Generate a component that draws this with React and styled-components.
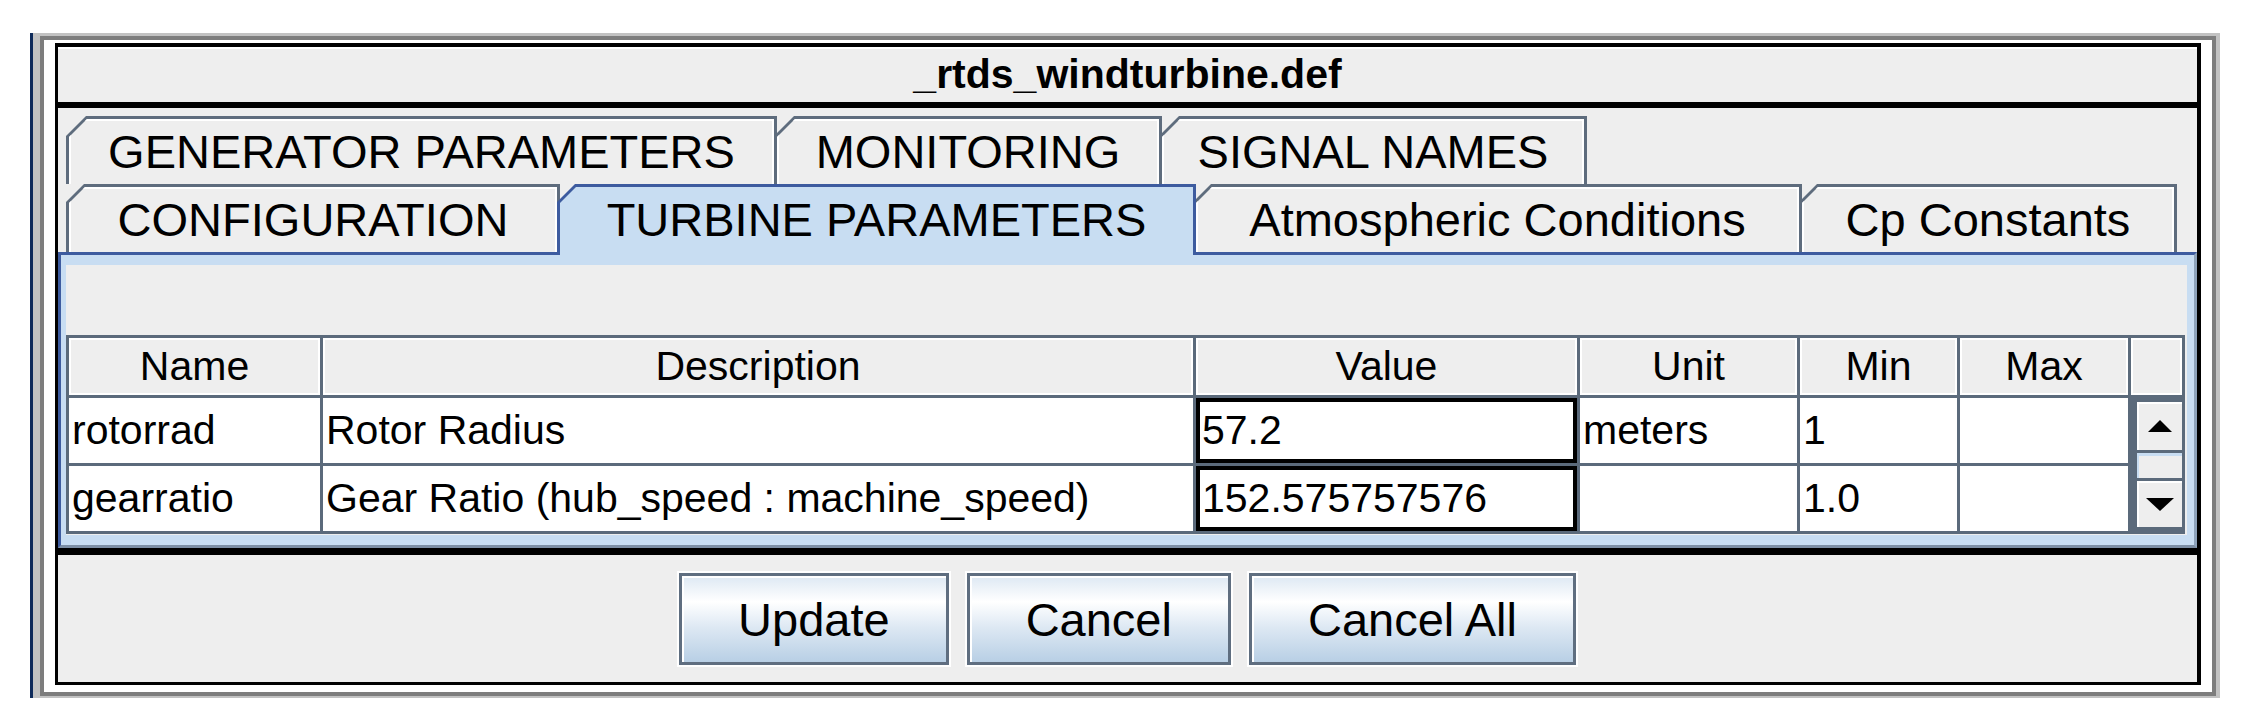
import React from 'react';
import styled, { createGlobalStyle } from 'styled-components';

const GlobalStyle = createGlobalStyle`
  * { box-sizing: border-box; }
  body {
    margin: 0;
    background: #fff;
    font-family: "Liberation Sans", Arial, sans-serif;
    color: #000;
  }
`;

const SLATE = '#5b6a7b';
const BLUE = '#3d5b9f';
const LIGHT_BLUE = '#c8ddf2';
const CONTROL = '#eeeeee';

/* ===== WINDOW SHELL ===== */
const Window = styled.div`
  margin: 33px 0 0 30px;
  width: 2190px;
  border-left: 3px solid #0e2a5a;
`;

const Frame = styled.div`
  border-style: solid;
  border-color: #c2c2c2;
  border-width: 3px 4px 2px 7px;
  box-shadow: inset 0 0 0 4px #7d7d7d;
  background: #fff;
  padding: 7px 15px 11px 15px;
`;

const InnerPanel = styled.div`
  border: 3px solid #000;
  border-top-width: 4px;
  border-right-width: 4px;
  background: ${CONTROL};
  display: flex;
  flex-direction: column;
`;

const TitleBar = styled.div`
  height: 55px;
  display: flex;
  align-items: center;
  justify-content: center;
  font-size: 41px;
  font-weight: 700;
  box-shadow: inset 0 2px 0 #fff;
`;

const Rule = styled.div`
  height: ${p => p.$h}px;
  background: #000;
`;

/* ===== TABS ===== */
const TabArea = styled.div`
  padding-top: 8px;
  display: flex;
  flex-direction: column;
`;

const TabRow = styled.div`
  display: flex;
  align-items: flex-end;
  padding-left: 8px;
`;

const TabShape = styled.div`
  flex: none;
  position: relative;
  width: ${p => p.$w}px;
  height: ${p => (p.$selected ? 71 : 68)}px;
  margin-left: -3px;
  margin-bottom: ${p => (p.$selected ? -3 : 0)}px;
  z-index: ${p => (p.$selected ? 2 : 'auto')};
  padding: 3px 3px 0 3px;
  background: ${p => (p.$selected ? BLUE : '#5e6c7d')};
  clip-path: polygon(0 ${p => p.$cut}px, ${p => p.$cut}px 0, 100% 0, 100% 100%, 0 100%);
  &:first-child { margin-left: 0; }
`;

const TabFace = styled.div`
  height: 100%;
  display: flex;
  align-items: center;
  justify-content: center;
  padding-bottom: ${p => (p.$selected ? 3 : 0)}px;
  font-size: 47px;
  white-space: nowrap;
  background: ${p => (p.$selected ? LIGHT_BLUE : CONTROL)};
  box-shadow: ${p => (p.$selected ? 'none' : 'inset 2px 2px 0 #fff, inset -2px 0 0 #fff')};
  clip-path: polygon(0 ${p => p.$cut - 2}px, ${p => p.$cut - 2}px 0, 100% 0, 100% 100%, 0 100%);
`;

function Tab({ label, width, selected, cut = 20 }) {
  return (
    <TabShape $w={width} $selected={selected} $cut={cut}>
      <TabFace $selected={selected} $cut={cut}>{label}</TabFace>
    </TabShape>
  );
}

const ContentPanel = styled.div`
  border-style: solid;
  border-width: 3px;
  border-color: ${BLUE} #8ea3bb #7d8fa5 ${BLUE};
  background: ${LIGHT_BLUE};
  padding: 10px 7px 10px 5px;
`;

const ContentInner = styled.div`
  background: ${CONTROL};
  padding: 70px 2px 1px 0;
`;

/* ===== TABLE ===== */
const ScrollPane = styled.div`
  display: flex;
  gap: 3px;
  padding: 3px;
  background: ${SLATE};
`;

const Grid = styled.div`
  display: grid;
  grid-template-columns: ${p => p.$cols};
  grid-template-rows: 57px 65px 65px;
  gap: 3px;
`;

const HeadCell = styled.div`
  display: flex;
  align-items: center;
  justify-content: center;
  background: ${CONTROL};
  box-shadow: inset 0 0 0 2px #fff;
  font-size: 41px;
  white-space: nowrap;
`;

const Cell = styled.div`
  display: flex;
  align-items: center;
  background: #fff;
  padding-left: ${p => (p.$edit ? 6 : 3)}px;
  font-size: 41px;
  white-space: nowrap;
  overflow: hidden;
  box-shadow: ${p => (p.$edit ? 'inset 0 0 0 4px #000' : 'none')};
`;

const ScrollColumn = styled.div`
  width: 51px;
  display: flex;
  flex-direction: column;
  gap: 3px;
`;

const Corner = styled.div`
  height: 57px;
  background: ${CONTROL};
  box-shadow: inset 0 0 0 2px #fff;
`;

const Scrollbar = styled.div`
  flex: 1;
  display: flex;
  flex-direction: column;
  gap: 3px;
  padding: 4px 0 4px 6px;
  background: ${SLATE};
`;

const ArrowBtn = styled.div`
  height: ${p => p.$h}px;
  display: flex;
  align-items: center;
  justify-content: center;
  background: ${CONTROL};
  box-shadow: inset 2px 2px 0 #fff;
`;

const Thumb = styled.div`
  flex: 1;
  background: ${CONTROL};
  box-shadow: inset 0 3px 0 ${LIGHT_BLUE}, inset 2px 0 0 ${LIGHT_BLUE};
`;

/* ===== BUTTONS ===== */
const ButtonPanel = styled.div`
  height: 127px;
  display: flex;
  justify-content: center;
  align-items: flex-start;
  gap: 18px;
  padding-top: 18px;
`;

const Button = styled.button`
  height: 92px;
  padding: 0 56px;
  border: 3px solid #5f6e80;
  background: linear-gradient(to bottom, #dde8f3 0%, #ffffff 30%, #dde8f3 60%, #b8cfe5 100%);
  box-shadow: inset 2px 2px 0 #fff, 0 0 0 2px #fff;
  font-family: "Liberation Sans", Arial, sans-serif;
  font-size: 47px;
  color: #000;
  white-space: nowrap;
`;

const columns = [
  { key: 'name', title: 'Name', w: 251 },
  { key: 'desc', title: 'Description', w: 870 },
  { key: 'value', title: 'Value', w: 381, edit: true },
  { key: 'unit', title: 'Unit', w: 217 },
  { key: 'min', title: 'Min', w: 157 },
  { key: 'max', title: 'Max', w: 168 },
];

const rows = [
  { name: 'rotorrad', desc: 'Rotor Radius', value: '57.2', unit: 'meters', min: '1', max: '' },
  { name: 'gearratio', desc: 'Gear Ratio (hub_speed : machine_speed)', value: '152.575757576', unit: '', min: '1.0', max: '' },
];

const backTabs = [
  { label: 'GENERATOR PARAMETERS', w: 711 },
  { label: 'MONITORING', w: 388 },
  { label: 'SIGNAL NAMES', w: 428 },
];

const frontTabs = [
  { label: 'CONFIGURATION', w: 494 },
  { label: 'TURBINE PARAMETERS', w: 639, selected: true },
  { label: 'Atmospheric Conditions', w: 609 },
  { label: 'Cp Constants', w: 378 },
];

export default function App() {
  return (
    <>
      <GlobalStyle />
      <Window>
        <Frame>
          <InnerPanel>
            <TitleBar>_rtds_windturbine.def</TitleBar>
            <Rule $h={6} />
            <TabArea>
              <TabRow>
                {backTabs.map(t => <Tab key={t.label} label={t.label} width={t.w} />)}
              </TabRow>
              <TabRow>
                {frontTabs.map(t => (
                  <Tab key={t.label} label={t.label} width={t.w} selected={t.selected} cut={18} />
                ))}
              </TabRow>
              <ContentPanel>
                <ContentInner>
                  <ScrollPane>
                    <Grid $cols={columns.map(c => `${c.w}px`).join(' ')}>
                      {columns.map(c => <HeadCell key={c.key}>{c.title}</HeadCell>)}
                      {rows.map(r =>
                        columns.map(c => (
                          <Cell key={r.name + c.key} $edit={c.edit}>{r[c.key]}</Cell>
                        ))
                      )}
                    </Grid>
                    <ScrollColumn>
                      <Corner />
                      <Scrollbar>
                        <ArrowBtn $h={48}>
                          <svg width="24" height="12" viewBox="0 0 24 12">
                            <polygon points="12,0 24,12 0,12" fill="#000" />
                          </svg>
                        </ArrowBtn>
                        <Thumb />
                        <ArrowBtn $h={46}>
                          <svg width="28" height="13" viewBox="0 0 28 13">
                            <polygon points="0,0 28,0 14,13" fill="#000" />
                          </svg>
                        </ArrowBtn>
                      </Scrollbar>
                    </ScrollColumn>
                  </ScrollPane>
                </ContentInner>
              </ContentPanel>
            </TabArea>
            <Rule $h={7} />
            <ButtonPanel>
              <Button>Update</Button>
              <Button>Cancel</Button>
              <Button>Cancel All</Button>
            </ButtonPanel>
          </InnerPanel>
        </Frame>
      </Window>
    </>
  );
}
